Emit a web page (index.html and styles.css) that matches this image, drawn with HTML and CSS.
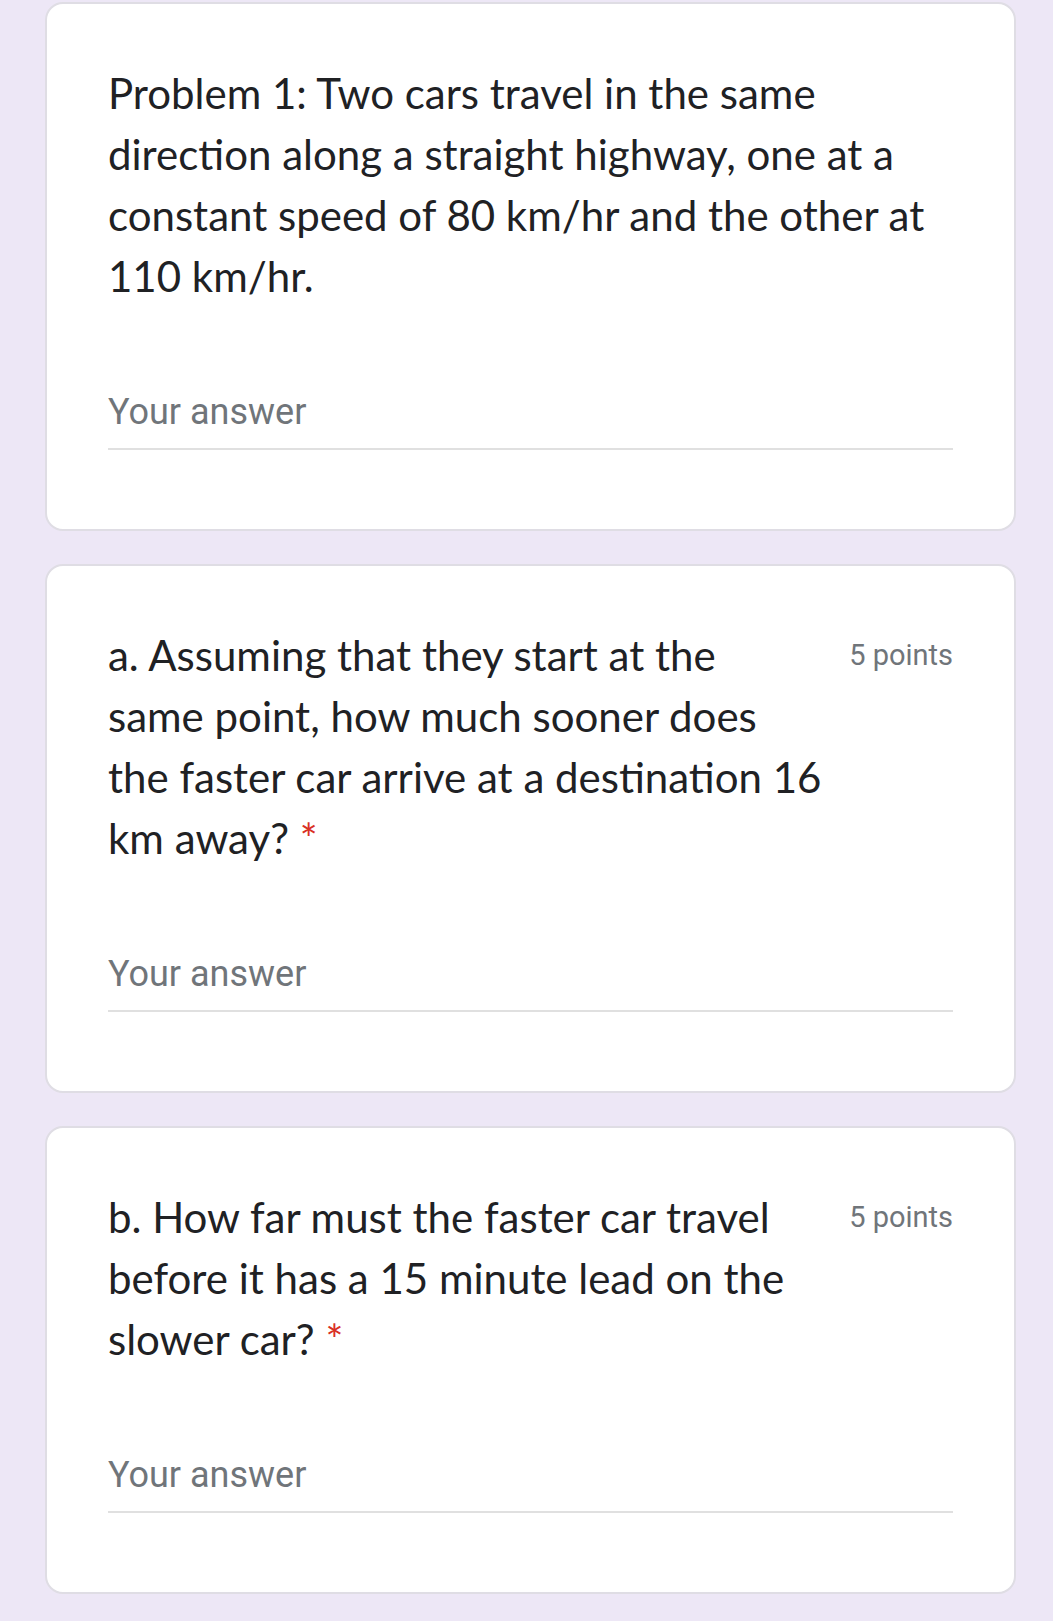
FILE: index.html
```html
<!DOCTYPE html>
<html lang="en">
<head>
  <meta charset="UTF-8">
  <meta name="viewport" content="width=device-width, initial-scale=1.0">
  <title>Problem 1</title>
  <link rel="stylesheet" href="styles.css">
</head>
<body>

  <!-- Intro card -->
  <div class="card">
    <div class="question">
      <div class="question-text">Problem 1: Two cars travel in the same<br>direction along a straight highway, one at a<br>constant speed of 80 km/hr and the other at<br>110 km/hr.</div>
    </div>
    <input type="text" class="answer" placeholder="Your answer">
  </div>

  <!-- Part a -->
  <div class="card">
    <div class="question">
      <div class="question-text">a. Assuming that they start at the<br>same point, how much sooner does<br>the faster car arrive at a destination 16<br>km away? <span class="required">*</span></div>
      <div class="points">5 points</div>
    </div>
    <input type="text" class="answer" placeholder="Your answer">
  </div>

  <!-- Part b -->
  <div class="card">
    <div class="question">
      <div class="question-text">b. How far must the faster car travel<br>before it has a 15 minute lead on the<br>slower car? <span class="required">*</span></div>
      <div class="points">5 points</div>
    </div>
    <input type="text" class="answer" placeholder="Your answer">
  </div>

</body>
</html>
```

FILE: styles.css
```css
body {
  margin: 0;
  padding: 2px 37px 0 45px;
  background-color: #ede7f6;
  font-family: Lato, Arial, sans-serif;
}
.card {
  background-color: white;
  border: 2px solid #dfdde4;
  border-radius: 18px;
  padding: 59px 61px 79px;
  margin-bottom: 33px;
}
.question {
  display: flex;
  justify-content: space-between;
  gap: 24px;
}
.question-text {
  flex: 1;
  white-space: nowrap;
  font-size: 42px;
  line-height: 61px;
  color: #202124;
}
.required {
  color: #d93025;
}
.points {
  font-family: Roboto, Arial, sans-serif;
  font-size: 29px;
  line-height: 61px;
  color: #70757a;
  white-space: nowrap;
}
.answer {
  display: block;
  box-sizing: border-box;
  width: 100%;
  margin-top: 81px;
  padding: 0 0 12px;
  border: none;
  border-bottom: 2px solid #e0e0e0;
  font-family: Roboto, Arial, sans-serif;
  font-size: 36px;
  line-height: 48px;
  height: 62px;
  color: #202124;
  outline: none;
}
.answer::placeholder {
  color: #70757a;
}
```
